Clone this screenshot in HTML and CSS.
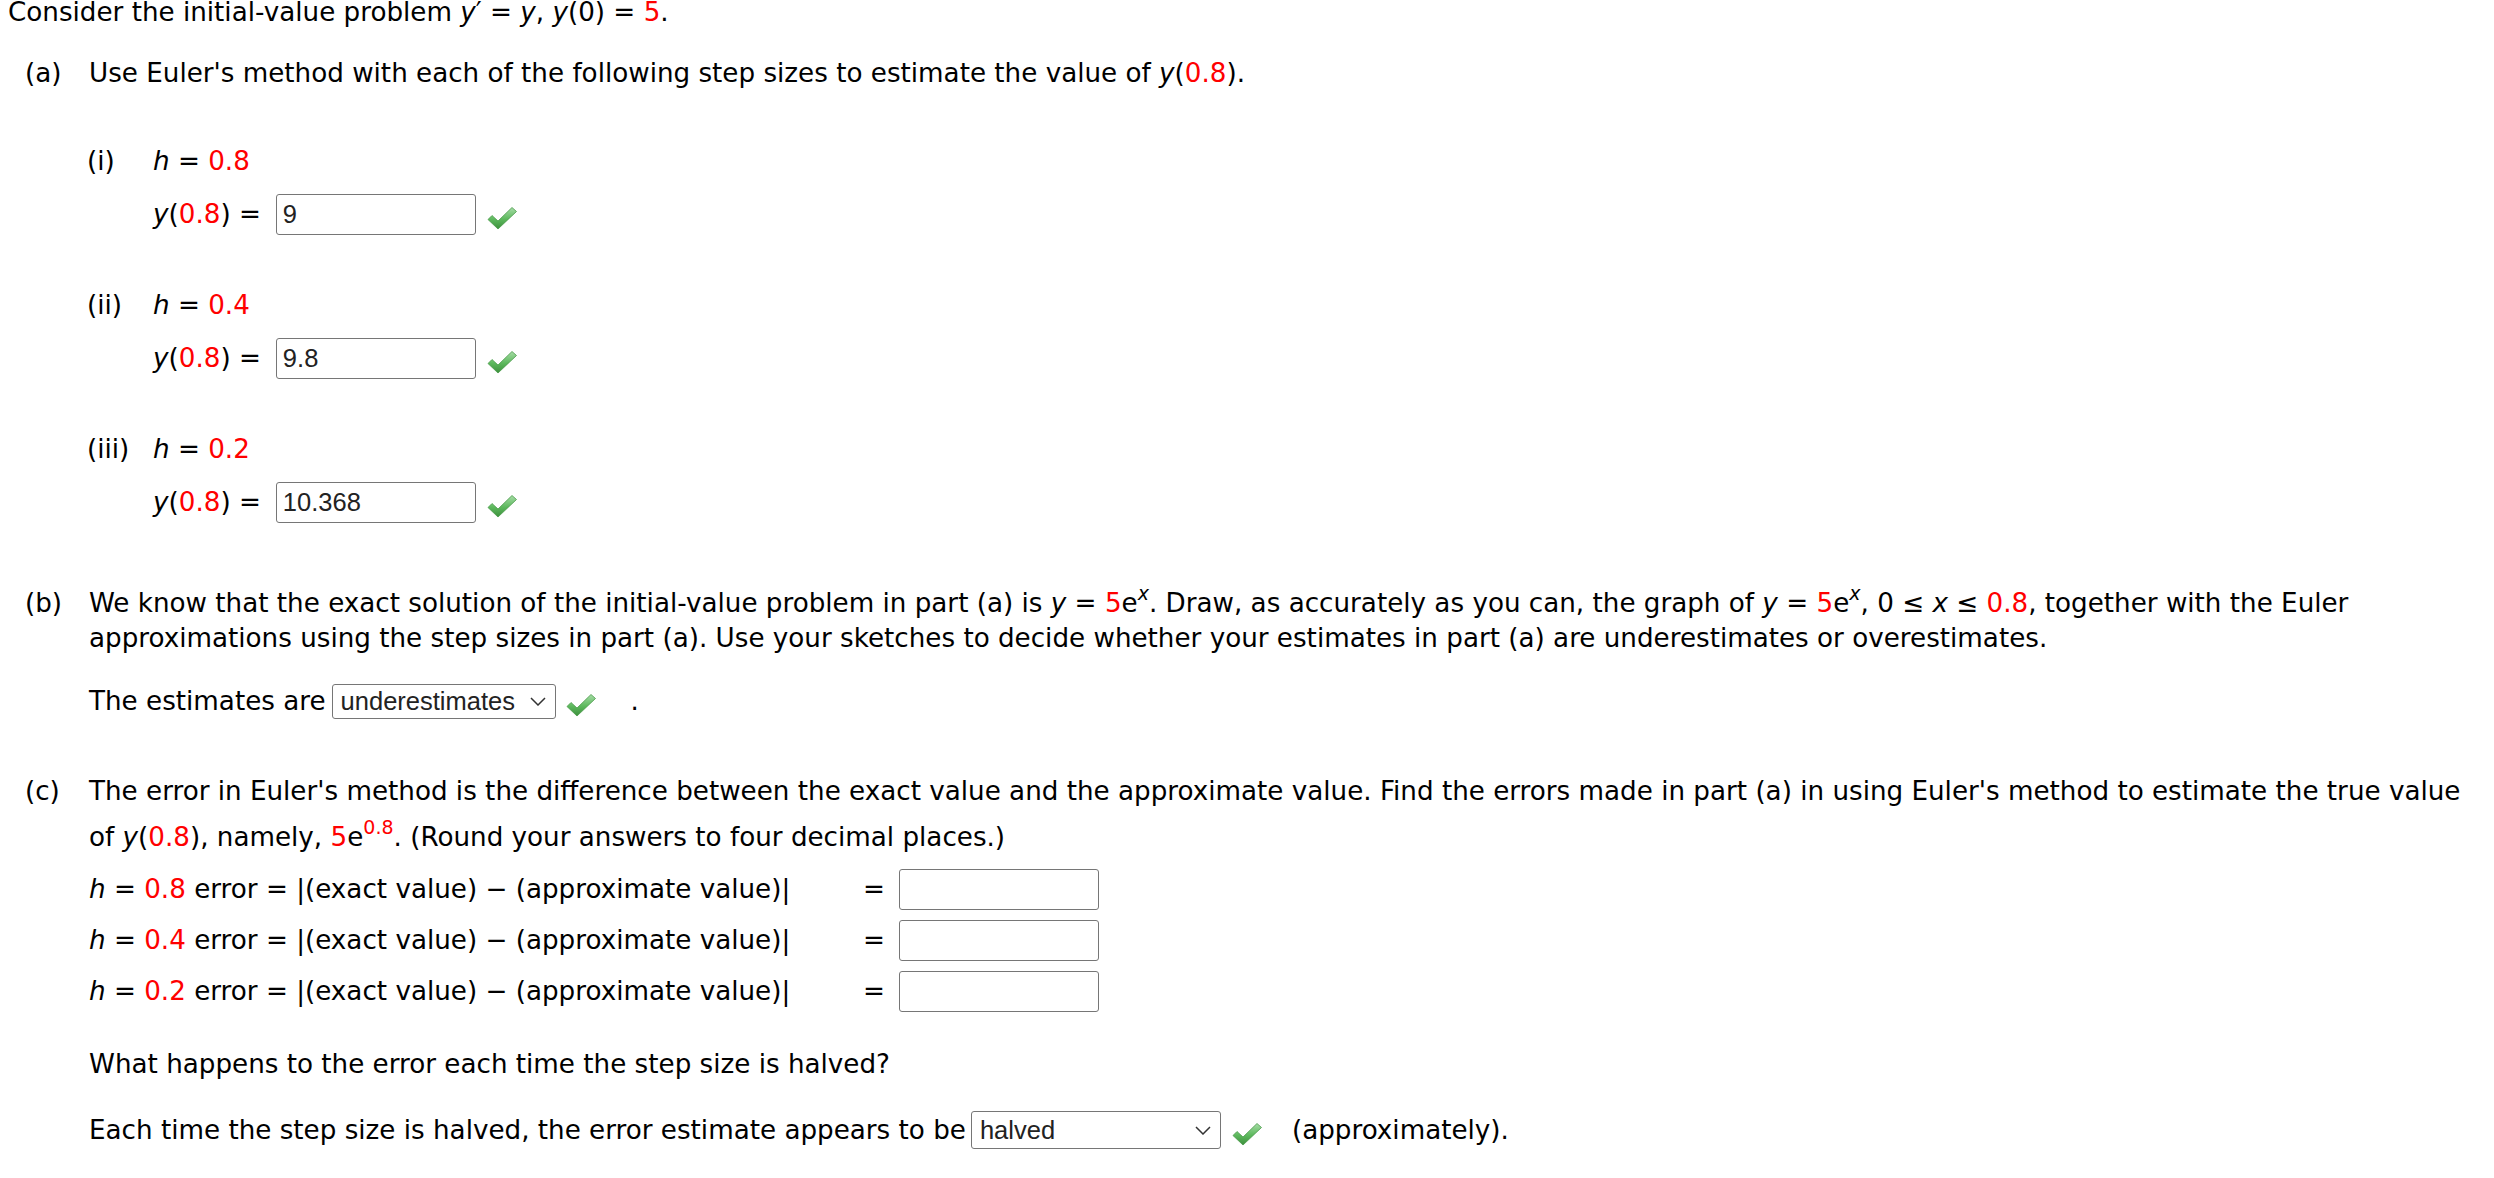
FILE: index.html
```html
<!DOCTYPE html>
<html>
<head>
<meta charset="utf-8">
<link rel="stylesheet" href="styles.css">
</head>
<body>
<div class="page">
  <div class="intro">Consider the initial-value problem <i>y</i>′ = <i>y</i>, <i>y</i>(0) = <span class="r">5</span>.</div>

  <div class="part part-a">
    <div class="plabel">(a)</div>
    <div class="pbody">
      <div class="line">Use Euler's method with each of the following step sizes to estimate the value of <i>y</i>(<span class="r">0.8</span>).</div>

      <div class="sub sub-1">
        <div class="slabel">(i)</div>
        <div class="sbody">
          <div class="line"><i>h</i> = <span class="r">0.8</span></div>
          <div class="ansrow"><span class="lhs"><i>y</i>(<span class="r">0.8</span>) =</span><input class="box" type="text" value="9" readonly><svg class="check" viewBox="0 0 30 24"><defs><linearGradient id="g1" x1="0" y1="0" x2="0" y2="1"><stop offset="0" stop-color="#a6dca6"/><stop offset="0.55" stop-color="#5cb85c"/><stop offset="1" stop-color="#3d8f3d"/></linearGradient></defs><path d="M1 13.5 L5 9.5 L11 15 L25 1.5 L29.5 5.5 L11 23 Z" fill="url(#g1)" stroke="#4a9a4a" stroke-width="0.8" stroke-linejoin="round"/></svg></div>
        </div>
      </div>

      <div class="sub sub-2">
        <div class="slabel">(ii)</div>
        <div class="sbody">
          <div class="line"><i>h</i> = <span class="r">0.4</span></div>
          <div class="ansrow"><span class="lhs"><i>y</i>(<span class="r">0.8</span>) =</span><input class="box" type="text" value="9.8" readonly><svg class="check" viewBox="0 0 30 24"><path d="M1 13.5 L5 9.5 L11 15 L25 1.5 L29.5 5.5 L11 23 Z" fill="url(#g1)" stroke="#4a9a4a" stroke-width="0.8" stroke-linejoin="round"/></svg></div>
        </div>
      </div>

      <div class="sub sub-3">
        <div class="slabel">(iii)</div>
        <div class="sbody">
          <div class="line"><i>h</i> = <span class="r">0.2</span></div>
          <div class="ansrow"><span class="lhs"><i>y</i>(<span class="r">0.8</span>) =</span><input class="box" type="text" value="10.368" readonly><svg class="check" viewBox="0 0 30 24"><path d="M1 13.5 L5 9.5 L11 15 L25 1.5 L29.5 5.5 L11 23 Z" fill="url(#g1)" stroke="#4a9a4a" stroke-width="0.8" stroke-linejoin="round"/></svg></div>
        </div>
      </div>
    </div>
  </div>

  <div class="part part-b">
    <div class="plabel">(b)</div>
    <div class="pbody">
      <div class="line">We know that the exact solution of the initial-value problem in part (a) is <i>y</i> = <span class="r">5</span>e<sup><i>x</i></sup>. Draw, as accurately as you can, the graph of <i>y</i> = <span class="r">5</span>e<sup><i>x</i></sup>, 0 ≤ <i>x</i> ≤ <span class="r">0.8</span>, together with the Euler</div>
      <div class="line">approximations using the step sizes in part (a). Use your sketches to decide whether your estimates in part (a) are underestimates or overestimates.</div>
      <div class="selrow est-row"><span>The estimates are</span><span class="sel sel-est"><span class="seltext">underestimates</span><svg class="chev" viewBox="0 0 16 9"><path d="M1 1 L8 8 L15 1" fill="none" stroke="#333" stroke-width="1.5"/></svg></span><svg class="check" viewBox="0 0 30 24"><path d="M1 13.5 L5 9.5 L11 15 L25 1.5 L29.5 5.5 L11 23 Z" fill="url(#g1)" stroke="#4a9a4a" stroke-width="0.8" stroke-linejoin="round"/></svg><span class="dot">.</span></div>
    </div>
  </div>

  <div class="part part-c">
    <div class="plabel">(c)</div>
    <div class="pbody">
      <div class="line">The error in Euler's method is the difference between the exact value and the approximate value. Find the errors made in part (a) in using Euler's method to estimate the true value</div>
      <div class="line line-2">of <i>y</i>(<span class="r">0.8</span>), namely, <span class="r">5</span>e<sup class="r">0.8</sup>. (Round your answers to four decimal places.)</div>
      <div class="errgrid">
        <span class="etext"><i>h</i> = <span class="r">0.8</span> error = |(exact value) − (approximate value)|</span><span class="eq">=</span><input class="box" type="text" value="" readonly>
        <span class="etext"><i>h</i> = <span class="r">0.4</span> error = |(exact value) − (approximate value)|</span><span class="eq">=</span><input class="box" type="text" value="" readonly>
        <span class="etext"><i>h</i> = <span class="r">0.2</span> error = |(exact value) − (approximate value)|</span><span class="eq">=</span><input class="box" type="text" value="" readonly>
      </div>
      <div class="line what">What happens to the error each time the step size is halved?</div>
      <div class="selrow halved-row"><span>Each time the step size is halved, the error estimate appears to be</span><span class="sel sel-half"><span class="seltext">halved</span><svg class="chev" viewBox="0 0 16 9"><path d="M1 1 L8 8 L15 1" fill="none" stroke="#333" stroke-width="1.5"/></svg></span><svg class="check" viewBox="0 0 30 24"><path d="M1 13.5 L5 9.5 L11 15 L25 1.5 L29.5 5.5 L11 23 Z" fill="url(#g1)" stroke="#4a9a4a" stroke-width="0.8" stroke-linejoin="round"/></svg><span class="approx">(approximately).</span></div>
    </div>
  </div>
</div>
</body>
</html>
```

FILE: styles.css
```css
html, body {
  margin: 0;
  padding: 0;
  background: #ffffff;
}

body {
  font-family: "DejaVu Sans", Verdana, sans-serif;
  font-size: 26.2px;
  line-height: 35px;
  color: #000000;
}

.page {
  margin-top: -5px;
  padding-left: 3px;
}

.intro {
  padding-left: 5px;
}

.r {
  color: #ff0000;
}

i {
  font-style: italic;
}

sup {
  font-size: 19px;
  line-height: 0;
  vertical-align: 0;
  position: relative;
  top: -12px;
}

.line {
  height: 35px;
  white-space: nowrap;
}

.part {
  display: flex;
  margin-left: 22px;
}

.plabel {
  width: 64px;
  flex: none;
}

.pbody {
  flex: 1;
}

.part-a {
  margin-top: 26px;
}

.sub {
  display: flex;
  margin-left: -2px;
}

.sub-1,
.sub-2,
.sub-3 {
  margin-top: 53px;
}

.slabel {
  width: 66px;
  flex: none;
}

.ansrow {
  display: flex;
  align-items: center;
  height: 41px;
  margin-top: 15px;
}

.lhs {
  margin-right: 15px;
}

.box {
  width: 200px;
  height: 41px;
  box-sizing: border-box;
  border: 1.5px solid #767676;
  border-radius: 3px;
  font-family: "Liberation Sans", Arial, sans-serif;
  font-size: 25.5px;
  color: #222222;
  padding: 0 0 0 6px;
  margin: 0;
  background: #ffffff;
  outline: none;
}

.check {
  width: 30px;
  height: 24px;
  margin-left: 11px;
  margin-top: 7px;
  flex: none;
}

.part-b {
  margin-top: 63px;
}

.selrow {
  display: flex;
  align-items: center;
  white-space: nowrap;
}

.est-row {
  margin-top: 28px;
  height: 35px;
}

.sel {
  display: inline-flex;
  align-items: center;
  justify-content: space-between;
  box-sizing: border-box;
  border: 1.5px solid #767676;
  border-radius: 3px;
  font-family: "Liberation Sans", Arial, sans-serif;
  font-size: 25.5px;
  color: #222222;
  padding: 0 9px 0 8px;
  margin-left: 6px;
  background: #ffffff;
}

.sel-est {
  width: 224px;
  height: 35px;
}

.sel-half {
  width: 250px;
  height: 38px;
  margin-left: 5px;
}

.chev {
  width: 16px;
  height: 9px;
  flex: none;
}

.est-row .check {
  margin-left: 10px;
}

.dot {
  margin-left: 35px;
}

.part-c {
  margin-top: 55px;
}

.line-2 {
  margin-top: 11px;
}

.errgrid {
  display: grid;
  grid-template-columns: 760px 50px 200px;
  grid-auto-rows: 41px;
  row-gap: 10px;
  align-items: center;
  margin-top: 14px;
}

.eq {
  text-align: center;
}

.what {
  margin-top: 35px;
}

.halved-row {
  margin-top: 29px;
  height: 38px;
}

.halved-row .check {
  margin-left: 11px;
}

.approx {
  margin-left: 30px;
}
```
